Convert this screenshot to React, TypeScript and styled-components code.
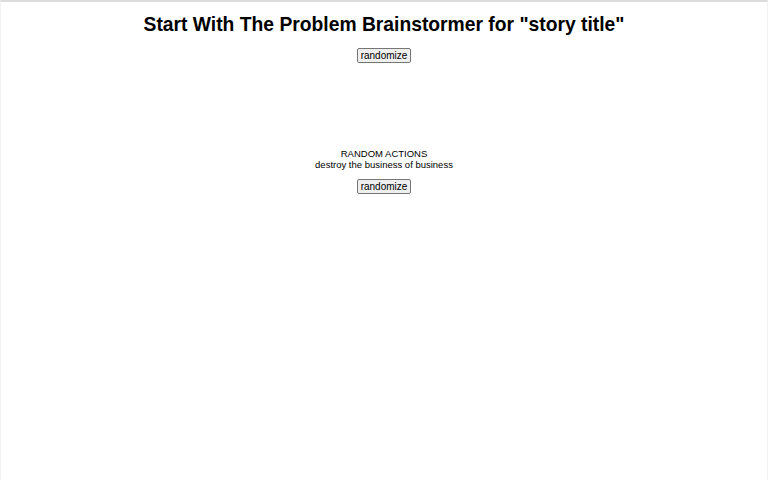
import React, { useState } from "react";
import styled, { createGlobalStyle } from "styled-components";

const GlobalStyle = createGlobalStyle`
  html, body {
    margin: 0;
    padding: 0;
    background: #fff;
  }
  body {
    font-family: "Liberation Sans", Arial, sans-serif;
    color: #000;
  }
`;

const Page = styled.div`
  min-height: 480px;
  box-sizing: border-box;
  border-top: 2px solid #dcdcdc;
  border-left: 1px solid #f2f2f2;
  border-right: 1px solid #f2f2f2;
  text-align: center;
`;

const Title = styled.h1`
  margin: 0;
  padding-top: 12px;
  font-size: 19.3px;
  font-weight: bold;
`;

const Section = styled.div<{ $gap: number }>`
  display: flex;
  flex-direction: column;
  align-items: center;
  margin-top: ${(p) => p.$gap}px;
`;

const Label = styled.div`
  font-size: 9.5px;
  line-height: 11px;
`;

const RandomButton = styled.button<{ $space: number }>`
  font-family: "Liberation Sans", Arial, sans-serif;
  font-size: 10px;
  padding: 1px 3px;
  margin-top: ${(p) => p.$space}px;
  background: #efefef;
  border: 1px solid #767676;
  border-radius: 2px;
`;

const actions = [
  "destroy the business of business",
  "rebuild the village from scratch",
  "trade secrets for favours",
];

const App: React.FC = () => {
  const [action, setAction] = useState(0);

  return (
    <Page>
      <GlobalStyle />
      <Title>Start With The Problem Brainstormer for "story title"</Title>
      <Section $gap={0}>
        <RandomButton $space={12}>randomize</RandomButton>
      </Section>
      <Section $gap={85}>
        <Label>RANDOM ACTIONS</Label>
        <Label>{actions[action]}</Label>
        <RandomButton
          $space={9}
          onClick={() => setAction((action + 1) % actions.length)}
        >
          randomize
        </RandomButton>
      </Section>
    </Page>
  );
};

export default App;
